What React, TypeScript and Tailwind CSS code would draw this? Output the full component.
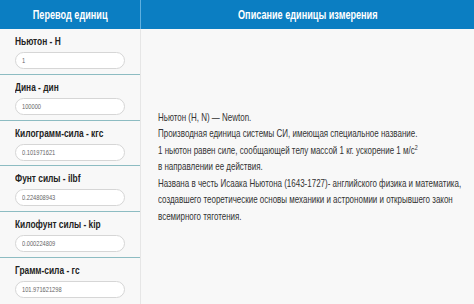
import React from "react";

const font = {
  fontFamily: '"Liberation Sans", Arial, sans-serif',
};

const units = [
  { label: "Ньютон - Н", value: "1" },
  { label: "Дина - дин", value: "100000" },
  { label: "Килограмм-сила - кгс", value: "0.101971621" },
  { label: "Фунт силы - ilbf", value: "0.224808943" },
  { label: "Килофунт силы - kip", value: "0.000224809" },
  { label: "Грамм-сила - гс", value: "101.971621298" },
];

// squeezes text horizontally to look like the condensed face in the original
const Narrow = ({ children, center }: { children: React.ReactNode; center?: boolean }) => (
  <span
    className={
      "inline-block whitespace-nowrap scale-x-[0.76] " + (center ? "origin-center" : "origin-left")
    }
  >
    {children}
  </span>
);

const lines: React.ReactNode[] = [
  "Ньютон (Н, N) — Newton.",
  "Производная единица системы СИ, имеющая специальное название.",
  <>
    1 ньютон равен силе, сообщающей телу массой 1 кг. ускорение 1 м/с
    <sup className="text-[7px]">2</sup>
  </>,
  "в направлении ее действия.",
  "Названа в честь Исаака Ньютона (1643-1727)- английского физика и математика,",
  "создавшего теоретические основы механики и астрономии и открывшего закон",
  "всемирного тяготения.",
];

const App = () => {
  return (
    <div className="w-[474px] h-[304px] overflow-hidden bg-[#f8f8f8]" style={font}>
      <div className="flex h-[29px] bg-[#0b7ec2] text-white font-bold text-[12px]">
        <div className="w-[141px] flex items-center justify-center border-r border-[#5fb0e0]">
          <Narrow center>Перевод единиц</Narrow>
        </div>
        <div className="flex-1 flex items-center justify-center">
          <Narrow center>Описание единицы измерения</Narrow>
        </div>
      </div>

      <div className="flex h-[275px]">
        {/* Left: unit inputs */}
        <div className="w-[141px] border-r border-[#e6e6e6] flex flex-col">
          {units.map((u, i) => (
            <div
              key={u.label}
              className={
                "h-[46px] px-[15px] pt-[5px] " +
                (i < units.length - 1 ? "border-b border-[#8dbcc2]" : "")
              }
            >
              <div className="text-[11px] font-bold text-[#222] leading-[15px]">
                <Narrow>{u.label}</Narrow>
              </div>
              <div className="mt-[3px] w-[110px] h-[17px] rounded-full border border-[#d6d6d6] bg-white px-[6px] flex items-center text-[7.5px] text-[#666]">
                <Narrow>{u.value}</Narrow>
              </div>
            </div>
          ))}
        </div>

        {/* Right: description */}
        <div className="flex-1 flex items-center pl-[17px] border-r border-[#e6e6e6] text-[10.5px] leading-[16.5px] text-[#333]">
          <div>
            {lines.map((l, i) => (
              <div key={i}>
                <Narrow>{l}</Narrow>
              </div>
            ))}
          </div>
        </div>
      </div>
    </div>
  );
};

export default App;
